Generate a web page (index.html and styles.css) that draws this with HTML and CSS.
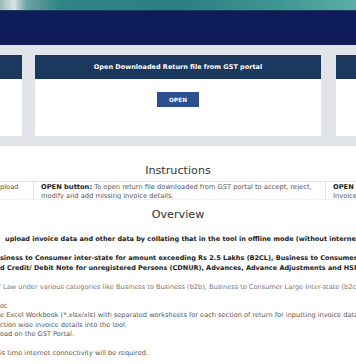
FILE: index.html
```html
<!DOCTYPE html>
<html>
<head>
<meta charset="utf-8">
<link rel="stylesheet" href="styles.css">
</head>
<body>
<header class="banner">
  <div class="banner-img"></div>
  <div class="banner-nav"></div>
</header>
<section class="actions">
  <div class="card card-side-left">
    <div class="card-head"></div>
    <div class="card-body"></div>
  </div>
  <div class="card card-main">
    <div class="card-head">Open Downloaded Return file from GST portal</div>
    <div class="card-body">
      <button class="btn">OPEN</button>
    </div>
  </div>
  <div class="card card-side-right">
    <div class="card-head"></div>
    <div class="card-body"></div>
  </div>
</section>
<section class="instructions">
  <h2 class="heading">Instructions</h2>
  <div class="inst-row">
    <div class="cell cell-left">pload</div>
    <div class="cell cell-mid"><b>OPEN button:</b> To open return file downloaded from GST portal to accept, reject, modify and add missing invoice details.</div>
    <div class="cell cell-right"><b>OPEN button</b><br>Invoice</div>
  </div>
</section>
<section class="overview">
  <h2 class="heading heading-ov">Overview</h2>
  <p class="para bold indent">upload invoice data and other data by collating that in the tool in offline mode (without internet connectivity)</p>
  <p class="para bold">siness to Consumer inter-state for amount exceeding Rs 2.5 Lakhs (B2CL), Business to Consumer<br>d Credit/ Debit Note for unregistered Persons (CDNUR), Advances, Advance Adjustments and HSN</p>
  <p class="para light cut">T Law under various categories like Business to Business (b2b), Business to Consumer Large Inter-state (b2cl)</p>
  <p class="para">ot.<br>e Excel Workbook (*.xlsx/xls) with separated worksheets for each section of return for inputting invoice data<br>ction wise invoice details into the tool.<br>oad on the GST Portal.</p>
  <p class="para">is time internet connectivity will be required.</p>
</section>
</body>
</html>
```
FILE: styles.css
```css
html, body {
  margin: 0;
  padding: 0;
}
body {
  width: 356px;
  height: 364px;
  overflow: hidden;
  background: #ffffff;
  font-family: "DejaVu Sans", "Liberation Sans", sans-serif;
  font-size: 6.6px;
  color: #555;
}
.banner-img {
  height: 10px;
  background: linear-gradient(90deg, #9cb7b8 0px, #d9e4e4 14px, #6fa3a5 26px, #2f8586 60px, #2a7f82 180px, #3f9793 280px, #5cada6 356px);
}
.banner-nav {
  height: 35px;
  background: #0e1d59;
  border-top: 1px solid #1d3a5c;
  box-sizing: border-box;
}
.actions {
  display: flex;
  gap: 13px;
  background: #e1e4e9;
  padding: 10px 0;
}
.card {
  display: flex;
  flex-direction: column;
  background: #fff;
}
.card-side-left { flex: 0 0 22px; }
.card-main { flex: 0 0 286px; }
.card-side-right { flex: 1 1 auto; margin-left: 2px; }
.card-head {
  height: 24px;
  background: #1b395f;
  color: #fff;
  font-weight: bold;
  font-size: 6.5px;
  display: flex;
  align-items: center;
  justify-content: center;
}
.card-body {
  height: 57px;
  display: flex;
  justify-content: center;
  align-items: flex-start;
}
.btn {
  margin-top: 13px;
  width: 42px;
  height: 15px;
  border: 0;
  padding: 0;
  background: #2c4f8d;
  color: #fff;
  font-family: inherit;
  font-size: 5.8px;
  font-weight: bold;
}
.heading {
  margin: 0;
  font-family: "DejaVu Sans", sans-serif;
  font-weight: normal;
  font-size: 11.2px;
  line-height: 16px;
  color: #333;
  text-align: center;
}
.instructions {
  padding-top: 17px;
}
.inst-row {
  margin-top: 2px;
  display: flex;
  border-top: 1px solid #e2e2e2;
  border-bottom: 1px solid #f0f0f0;
  height: 19px;
  box-sizing: border-box;
  line-height: 9px;
  font-size: 6.7px;
}
.cell {
  padding: 1px 0 0 7px;
  white-space: nowrap;
  overflow: hidden;
  color: #555;
}
.cell b { color: #222; }
.cell-left { flex: 0 0 33px; padding-left: 0; box-sizing: border-box; }
.cell-mid {
  flex: 0 0 292px;
  box-sizing: border-box;
  border-left: 1px solid #e2e2e2;
  white-space: normal;
  padding-right: 10px;
}
.cell-right { flex: 1 1 auto; border-left: 1px solid #e2e2e2; }
.overview {
  padding-top: 7px;
}
.heading-ov {
  margin-bottom: 12px;
}
.para {
  margin: 0 0 10px 0;
  line-height: 9.3px;
  white-space: nowrap;
  color: #555;
}
.bold { font-weight: bold; color: #222; font-size: 6.5px; }
.light { color: #777; }
.indent { text-indent: 5px; }
.cut { text-indent: -3px; }
```
